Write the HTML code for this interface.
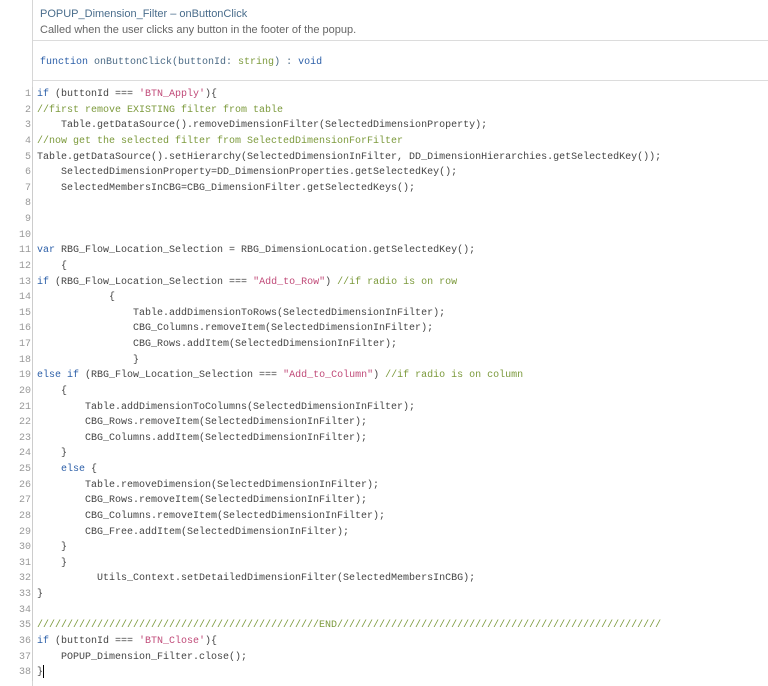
<!DOCTYPE html>
<html><head><meta charset="utf-8"><style>
body{margin:0;width:768px;height:686px;background:#fff;overflow:hidden;position:relative;font-family:"Liberation Sans",sans-serif}
.lb{position:absolute;left:32px;top:0;width:1px;height:686px;background:#d6d6d6}
.hd{position:absolute;left:33px;top:0;right:0;height:40px;border-bottom:1px solid #dcdcdc}
.t1{position:absolute;left:40px;top:8px;font-size:11px;color:#4a6d8c}
.t2{position:absolute;left:40px;top:24px;font-size:11px;color:#666}
.fn{position:absolute;left:40px;top:57px;font:10px "Liberation Mono",monospace;color:#4b6a85;white-space:pre}
.sep{position:absolute;left:33px;right:0;top:80px;height:1px;background:#dcdcdc}
.gut{position:absolute;left:0;top:87px;width:31px;text-align:right;font:10px/15.62px "Liberation Mono",monospace;color:#999;border-right:1px solid #ccc;padding-right:1px}
.code{position:absolute;left:37px;top:87px;font:10px/15.62px "Liberation Mono",monospace;color:#444;white-space:pre}
.k{color:#2c5fa8}.c{color:#7c9a3c}.s{color:#c04a78}
.cur{display:inline-block;width:1px;height:13px;background:#000;vertical-align:middle}
.top{position:absolute;left:0;top:0;width:768px;height:1px;background:#e8e8e8}
</style></head><body>
<div class="lb"></div>
<div class="hd"></div>
<div class="t1">POPUP_Dimension_Filter – onButtonClick</div>
<div class="t2">Called when the user clicks any button in the footer of the popup.</div>
<div class="fn"><span class="k">function</span> onButtonClick(buttonId: <span class="c">string</span>) : <span class="k">void</span></div>
<div class="sep"></div>
<div class="gut">1<br>2<br>3<br>4<br>5<br>6<br>7<br>8<br>9<br>10<br>11<br>12<br>13<br>14<br>15<br>16<br>17<br>18<br>19<br>20<br>21<br>22<br>23<br>24<br>25<br>26<br>27<br>28<br>29<br>30<br>31<br>32<br>33<br>34<br>35<br>36<br>37<br>38</div>
<div class="code"><span class="k">if</span> (buttonId === <span class="s">'BTN_Apply'</span>){
<span class="c">//first remove EXISTING filter from table</span>
    Table.getDataSource().removeDimensionFilter(SelectedDimensionProperty);
<span class="c">//now get the selected filter from SelectedDimensionForFilter</span>
Table.getDataSource().setHierarchy(SelectedDimensionInFilter, DD_DimensionHierarchies.getSelectedKey());
    SelectedDimensionProperty=DD_DimensionProperties.getSelectedKey();
    SelectedMembersInCBG=CBG_DimensionFilter.getSelectedKeys();



<span class="k">var</span> RBG_Flow_Location_Selection = RBG_DimensionLocation.getSelectedKey();
    {
<span class="k">if</span> (RBG_Flow_Location_Selection === <span class="s">"Add_to_Row"</span>) <span class="c">//if radio is on row</span>
            {
                Table.addDimensionToRows(SelectedDimensionInFilter);
                CBG_Columns.removeItem(SelectedDimensionInFilter);
                CBG_Rows.addItem(SelectedDimensionInFilter);
                }
<span class="k">else if</span> (RBG_Flow_Location_Selection === <span class="s">"Add_to_Column"</span>) <span class="c">//if radio is on column</span>
    {
        Table.addDimensionToColumns(SelectedDimensionInFilter);
        CBG_Rows.removeItem(SelectedDimensionInFilter);
        CBG_Columns.addItem(SelectedDimensionInFilter);
    }
    <span class="k">else</span> {
        Table.removeDimension(SelectedDimensionInFilter);
        CBG_Rows.removeItem(SelectedDimensionInFilter);
        CBG_Columns.removeItem(SelectedDimensionInFilter);
        CBG_Free.addItem(SelectedDimensionInFilter);
    }
    }
          Utils_Context.setDetailedDimensionFilter(SelectedMembersInCBG);
}

<span class="c">///////////////////////////////////////////////END//////////////////////////////////////////////////////</span>
<span class="k">if</span> (buttonId === <span class="s">'BTN_Close'</span>){
    POPUP_Dimension_Filter.close();
}<span class="cur"></span></div>
</body></html>
